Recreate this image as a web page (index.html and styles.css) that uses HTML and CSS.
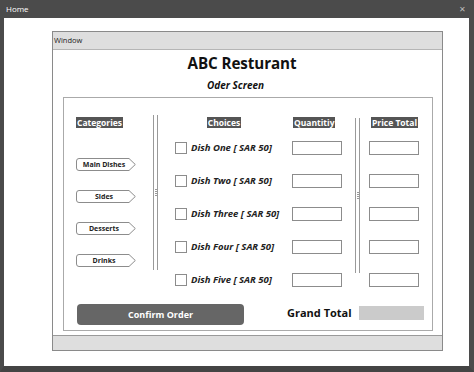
FILE: index.html
```html
<!DOCTYPE html>
<html>
<head>
<meta charset="utf-8">
<link rel="stylesheet" href="styles.css">
</head>
<body>
<div class="app">
  <div class="titlebar">
    <span class="home">Home</span>
    <span class="close">✕</span>
  </div>
  <div class="desk">
    <div class="window">
      <div class="win-head">Window</div>
      <div class="win-body">
        <h1 class="title">ABC Resturant</h1>
        <h2 class="subtitle">Oder Screen</h2>
        <div class="panel">
          <div class="cols">
            <div class="col col-cat">
              <div class="hdr">Categories</div>
              <div class="cat-list">
                <div class="cat"><svg class="cat-shape" viewBox="0 0 60 13"><path d="M3 0.5 H53 L59.3 6.5 L53 12.5 H3 Q0.5 12.5 0.5 10 V3 Q0.5 0.5 3 0.5 Z"/></svg><span class="cat-text">Main Dishes</span></div>
                <div class="cat"><svg class="cat-shape" viewBox="0 0 60 13"><path d="M3 0.5 H53 L59.3 6.5 L53 12.5 H3 Q0.5 12.5 0.5 10 V3 Q0.5 0.5 3 0.5 Z"/></svg><span class="cat-text">Sides</span></div>
                <div class="cat"><svg class="cat-shape" viewBox="0 0 60 13"><path d="M3 0.5 H53 L59.3 6.5 L53 12.5 H3 Q0.5 12.5 0.5 10 V3 Q0.5 0.5 3 0.5 Z"/></svg><span class="cat-text">Desserts</span></div>
                <div class="cat"><svg class="cat-shape" viewBox="0 0 60 13"><path d="M3 0.5 H53 L59.3 6.5 L53 12.5 H3 Q0.5 12.5 0.5 10 V3 Q0.5 0.5 3 0.5 Z"/></svg><span class="cat-text">Drinks</span></div>
              </div>
            </div>
            <div class="sep sep1"><span class="grip"></span></div>
            <div class="col col-choice">
              <div class="hdr">Choices</div>
              <div class="rows">
                <div class="row"><span class="box"></span><span class="dish">Dish One [ SAR 50]</span></div>
                <div class="row"><span class="box"></span><span class="dish">Dish Two [ SAR 50]</span></div>
                <div class="row"><span class="box"></span><span class="dish">Dish Three [ SAR 50]</span></div>
                <div class="row"><span class="box"></span><span class="dish">Dish Four [ SAR 50]</span></div>
                <div class="row"><span class="box"></span><span class="dish">Dish Five [ SAR 50]</span></div>
              </div>
            </div>
            <div class="col col-qty">
              <div class="hdr">Quantitiy</div>
              <div class="rows">
                <div class="row"><span class="field"></span></div>
                <div class="row"><span class="field"></span></div>
                <div class="row"><span class="field"></span></div>
                <div class="row"><span class="field"></span></div>
                <div class="row"><span class="field"></span></div>
              </div>
            </div>
            <div class="sep sep2"><span class="grip"></span></div>
            <div class="col col-price">
              <div class="hdr">Price Total</div>
              <div class="rows">
                <div class="row"><span class="field"></span></div>
                <div class="row"><span class="field"></span></div>
                <div class="row"><span class="field"></span></div>
                <div class="row"><span class="field"></span></div>
                <div class="row"><span class="field"></span></div>
              </div>
            </div>
          </div>
          <div class="footer">
            <div class="confirm">Confirm Order</div>
            <div class="grand">Grand Total</div>
            <div class="grand-box"></div>
          </div>
        </div>
      </div>
      <div class="win-bar"></div>
    </div>
  </div>
</div>
</body>
</html>
```

FILE: styles.css
```css
* { box-sizing: border-box; }
html, body { margin: 0; padding: 0; background: #fff; }
body { font-family: "Open Sans", "Liberation Sans", sans-serif; }

.app {
  width: 474px;
  height: 372px;
  display: flex;
  flex-direction: column;
}
.titlebar {
  height: 18px;
  background: #4b4b4b;
  display: flex;
  align-items: center;
  justify-content: space-between;
  padding: 0 8px 0 6px;
  color: #fff;
}
.home { font-size: 8px; line-height: 10px; }
.close { font-size: 8px; color: #bbb; line-height: 10px; }

.desk {
  flex: 1;
  background: #fff;
  border-left: 4px solid #4b4b4b;
  border-right: 5px solid #4b4b4b;
  border-bottom: 6px solid #444;
  padding: 13px 0 0 48px;
}
.window {
  width: 391px;
  border: 1px solid #8a8a8a;
  display: flex;
  flex-direction: column;
}
.win-head {
  height: 18px;
  background: #dedede;
  border-bottom: 1px solid #b5b5b5;
  font-size: 7.5px;
  line-height: 17px;
  padding-left: 1px;
  color: #222;
}
.win-body {
  display: flex;
  flex-direction: column;
  align-items: center;
  padding: 3px 0 4px;
}
.title {
  margin: 0 11px 0 0;
  font-size: 15.2px;
  line-height: 20px;
  font-weight: 700;
  color: #111;
  letter-spacing: -0.1px;
}
.subtitle {
  margin: 5px 24px 0 0;
  font-size: 10px;
  line-height: 14px;
  font-weight: 700;
  font-style: italic;
  color: #111;
}
.panel {
  margin-top: 5px;
  align-self: stretch;
  margin-left: 10px;
  margin-right: 9px;
  border: 1px solid #aaa;
  display: flex;
  flex-direction: column;
}
.cols {
  display: flex;
  height: 198px;
}
.col { display: flex; flex-direction: column; padding-top: 19px; }
.hdr {
  height: 11px;
  background: #555;
  color: #fff;
  font-size: 8.5px;
  font-weight: 700;
  line-height: 11px;
  padding: 0 1px;
  white-space: nowrap;
  align-self: flex-start;
}
.col-cat { width: 89px; padding-left: 12px; }
.cat-list { margin-top: 20px; display: flex; flex-direction: column; }
.cat {
  position: relative;
  width: 60px;
  height: 32px;
  display: flex;
  align-items: center;
  justify-content: center;
}
.cat-shape {
  position: absolute;
  left: 0;
  top: 9.5px;
  width: 60px;
  height: 13px;
}
.cat-shape path { fill: #fff; stroke: #8c8c8c; stroke-width: 1; }
.cat-text {
  position: relative;
  font-size: 7px;
  font-weight: 700;
  color: #222;
  padding-right: 4px;
}
.sep {
  width: 5px;
  border-left: 1px solid #9a9a9a;
  border-right: 1px solid #9a9a9a;
  display: flex;
  align-items: center;
  justify-content: center;
}
.sep1 { margin-top: 17px; height: 155px; }
.sep2 { margin-top: 20px; height: 155px; }
.grip {
  width: 2px;
  height: 7px;
  background: repeating-linear-gradient(#999 0 1px, transparent 1px 2px);
}
.col-choice { width: 134px; }
.col-choice .hdr { align-self: center; margin-left: -2px; }
.rows { margin-top: 3px; display: flex; flex-direction: column; }
.row { height: 33px; display: flex; align-items: center; }
.col-choice .row { padding-left: 17px; gap: 4px; }
.box {
  width: 12px;
  height: 12px;
  border: 1px solid #8c8c8c;
  background: #fff;
  flex: none;
}
.dish {
  font-size: 9.5px;
  font-weight: 700;
  font-style: italic;
  color: #222;
  white-space: nowrap;
}
.col-qty { width: 63px; }
.col-qty .hdr { margin-left: 1px; }
.field {
  width: 50px;
  height: 14px;
  border: 1px solid #8c8c8c;
  background: #fff;
}
.col-price { width: 71px; align-items: flex-start; }
.col-price .hdr { margin-left: 11px; }
.col-price .row { padding-left: 9px; }

.footer {
  margin-top: 8px;
  padding: 0 0 5px 13px;
  display: flex;
  align-items: center;
}
.confirm {
  flex: none;
  width: 167px;
  height: 21px;
  background: #666;
  border-radius: 4px;
  color: #fff;
  font-size: 9px;
  font-weight: 700;
  display: flex;
  align-items: center;
  justify-content: center;
}
.grand {
  flex: none;
  white-space: nowrap;
  margin-left: 43px;
  font-size: 11px;
  font-weight: 700;
  color: #111;
  line-height: 16px;
  margin-top: -4px;
}
.grand-box {
  flex: none;
  margin-left: 7px;
  width: 65px;
  height: 14px;
  background: #cbcbcb;
  margin-top: -4px;
}
.win-bar {
  height: 15px;
  background: #dedede;
  border-top: 1px solid #9a9a9a;
}
```
